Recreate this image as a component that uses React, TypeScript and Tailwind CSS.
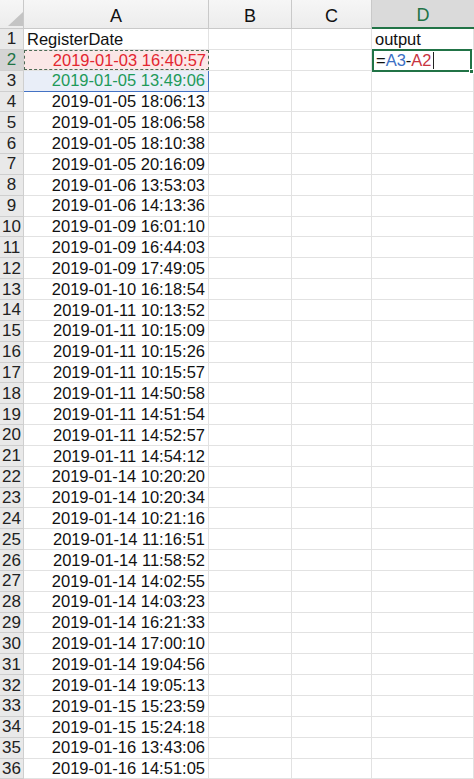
import { ReactElement } from "react";

const DATES: string[] = [
  "2019-01-03 16:40:57",
  "2019-01-05 13:49:06",
  "2019-01-05 18:06:13",
  "2019-01-05 18:06:58",
  "2019-01-05 18:10:38",
  "2019-01-05 20:16:09",
  "2019-01-06 13:53:03",
  "2019-01-06 14:13:36",
  "2019-01-09 16:01:10",
  "2019-01-09 16:44:03",
  "2019-01-09 17:49:05",
  "2019-01-10 16:18:54",
  "2019-01-11 10:13:52",
  "2019-01-11 10:15:09",
  "2019-01-11 10:15:26",
  "2019-01-11 10:15:57",
  "2019-01-11 14:50:58",
  "2019-01-11 14:51:54",
  "2019-01-11 14:52:57",
  "2019-01-11 14:54:12",
  "2019-01-14 10:20:20",
  "2019-01-14 10:20:34",
  "2019-01-14 10:21:16",
  "2019-01-14 11:16:51",
  "2019-01-14 11:58:52",
  "2019-01-14 14:02:55",
  "2019-01-14 14:03:23",
  "2019-01-14 16:21:33",
  "2019-01-14 17:00:10",
  "2019-01-14 19:04:56",
  "2019-01-14 19:05:13",
  "2019-01-15 15:23:59",
  "2019-01-15 15:24:18",
  "2019-01-16 13:43:06",
  "2019-01-16 14:51:05",
];

const COLS = "grid grid-cols-[24px_185px_83px_80px_1fr]";

const RowHead = ({ n, active }: { n: number; active?: boolean }) => (
  <div
    className={`flex items-center justify-center border-b border-r border-[#cfcfcf] text-[17px] ${
      active ? "bg-[#d4d4d4] text-[#217346]" : "bg-[#e9e9e9] text-[#222]"
    }`}
  >
    {n}
  </div>
);

const Cell = ({ children, className = "" }: { children?: any; className?: string }) => (
  <div
    className={`flex items-center overflow-visible whitespace-nowrap border-b border-r border-[#e2e2e2] px-[3px] ${className}`}
  >
    {children}
  </div>
);

const App = (): ReactElement => {
  return (
    <div className="h-[779px] w-[474px] overflow-hidden bg-white font-['Liberation_Sans',Arial,sans-serif] text-[16.5px] leading-none text-[#111]">
      {/* column header */}
      <div className={`${COLS} h-[29px] bg-gradient-to-b from-[#f6f6f6] to-[#ececec]`}>
        <div className="relative border-b border-r border-[#c9c9c9]">
          <svg className="absolute left-[8px] top-[12px]" width="15" height="14" viewBox="0 0 15 14">
            <polygon points="15,0 15,14 0,14" fill="#c4c4c4" />
          </svg>
        </div>
        <div className="flex items-center justify-center border-b border-r border-[#c9c9c9] pt-[3px] text-[18px]">A</div>
        <div className="flex items-center justify-center border-b border-r border-[#c9c9c9] pt-[3px] text-[18px]">B</div>
        <div className="flex items-center justify-center border-b border-r border-[#c9c9c9] pt-[3px] text-[18px]">C</div>
        <div className="flex items-center justify-center border-b-2 border-[#217346] bg-[#dadada] pt-[3px] text-[18px] text-[#217346]">
          D
        </div>
      </div>

      {/* row 1 */}
      <div className={`${COLS} h-[20.85px]`}>
        <RowHead n={1} />
        <Cell>RegisterDate</Cell>
        <Cell />
        <Cell />
        <Cell>output</Cell>
      </div>

      {DATES.map((d, i) => {
        const n = i + 2;
        if (n === 2) {
          return (
            <div key={n} className={`${COLS} h-[20.85px]`}>
              <RowHead n={n} active />
              <div className="relative flex items-center justify-end whitespace-nowrap border-b border-[#e2e2e2] bg-[#fbe7e7] px-[3px] text-[#e3262f]">
                <div className="absolute inset-0 border-[1.5px] border-dashed border-[#4d6a55]" />
                {d}
              </div>
              <Cell />
              <Cell />
              <div className="relative flex items-center whitespace-nowrap px-[4px]">
                <div className="absolute -top-px bottom-[-1px] left-0 right-[2px] border-2 border-[#217346]" />
                <div className="absolute bottom-[-3px] right-0 h-[5px] w-[5px] border border-white bg-[#217346]" />
                <span>=</span>
                <span className="text-[#3b6fc4]">A3</span>
                <span>-</span>
                <span className="text-[#c8343f]">A2</span>
                <span className="ml-[1px] h-[17px] w-px bg-[#222]" />
              </div>
            </div>
          );
        }
        if (n === 3) {
          return (
            <div key={n} className={`${COLS} h-[20.85px]`}>
              <RowHead n={n} />
              <div className="flex items-center justify-end whitespace-nowrap border-b border-r border-[#4472c4] bg-[#e9eef8] px-[3px] text-[#1e9a5a]">
                {d}
              </div>
              <Cell />
              <Cell />
              <Cell />
            </div>
          );
        }
        return (
          <div key={n} className={`${COLS} h-[20.85px]`}>
            <RowHead n={n} />
            <Cell className="justify-end">{d}</Cell>
            <Cell />
            <Cell />
            <Cell />
          </div>
        );
      })}
    </div>
  );
};

export default App;
